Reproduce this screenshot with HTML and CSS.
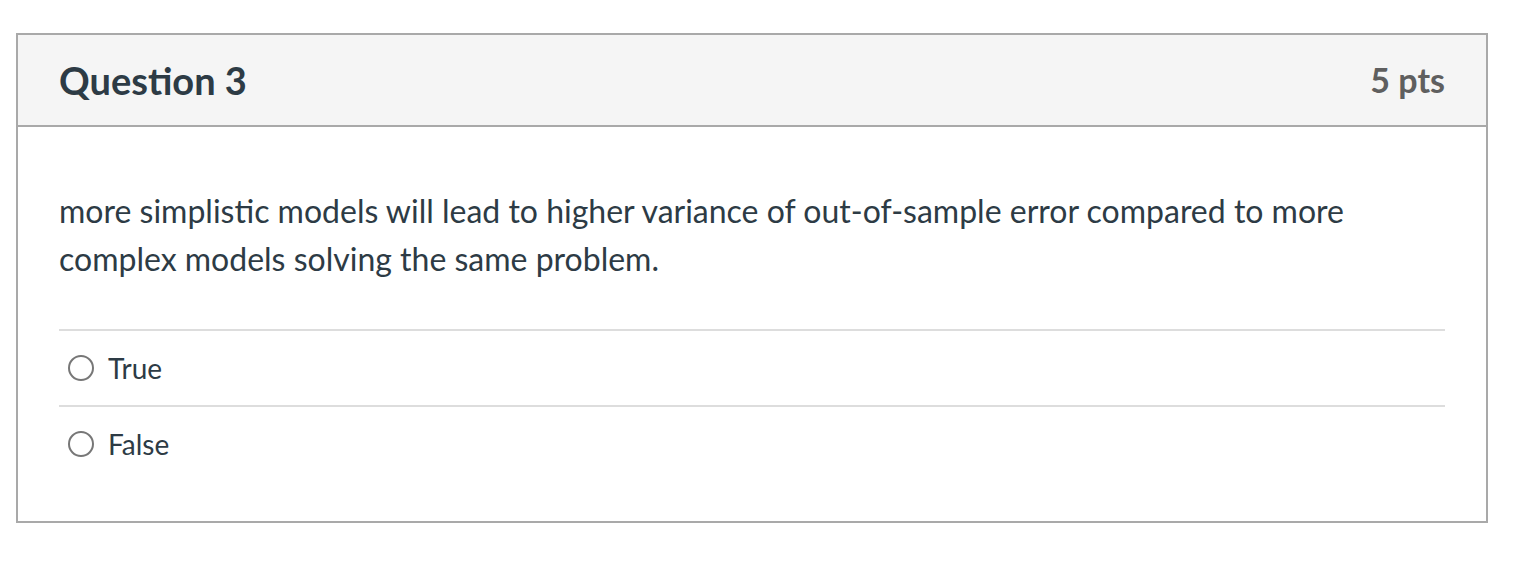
FILE: index.html
```html
<!DOCTYPE html>
<html lang="en">
<head>
<meta charset="utf-8">
<title>Question 3</title>
<link rel="stylesheet" href="styles.css">
</head>
<body>
<div class="question">
  <div class="question-header">
    <h2 class="question-title">Question 3</h2>
    <span class="question-points">5 pts</span>
  </div>
  <div class="question-body">
    <p class="question-text">more simplistic models will lead to higher variance of out-of-sample error compared to more complex models solving the same problem.</p>
    <div class="answers">
      <label class="answer"><span class="radio"></span><span class="answer-label">True</span></label>
      <label class="answer"><span class="radio"></span><span class="answer-label">False</span></label>
    </div>
  </div>
</div>
</body>
</html>
```
FILE: styles.css
```css
html, body {
  margin: 0;
  padding: 0;
  background: #ffffff;
}
body {
  font-family: Lato, "Noto Sans", sans-serif;
  color: #2d3b45;
  padding: 33px 0 0 16px;
}
.question {
  box-sizing: border-box;
  width: 1472px;
  border: 2px solid #a9a9a9;
  background: #fff;
}
.question-header {
  display: flex;
  justify-content: space-between;
  align-items: center;
  height: 90px;
  padding: 0 41px 0 41px;
  background: #f5f5f5;
  border-bottom: 2px solid #a9a9a9;
}
.question-title {
  margin: 0;
  font-size: 38px;
  line-height: 1;
  font-weight: 700;
  color: #2d3b45;
}
.question-points {
  font-size: 34px;
  line-height: 1;
  font-weight: 700;
  color: #5f5f5f;
}
.question-body {
  padding: 60px 41px 40px 41px;
}
.question-text {
  margin: 0 0 46px 0;
  font-size: 32px;
  line-height: 48px;
}
.answers {
  display: flex;
  flex-direction: column;
}
.answer {
  display: flex;
  align-items: center;
  height: 76px;
  border-top: 2px solid #dddddd;
  box-sizing: border-box;
  padding-left: 9px;
  gap: 14px;
}
.radio {
  box-sizing: border-box;
  width: 26px;
  height: 26px;
  border: 2px solid #777777;
  border-radius: 50%;
  background: #fff;
  flex: none;
}
.answer-label {
  font-size: 28px;
}
```
